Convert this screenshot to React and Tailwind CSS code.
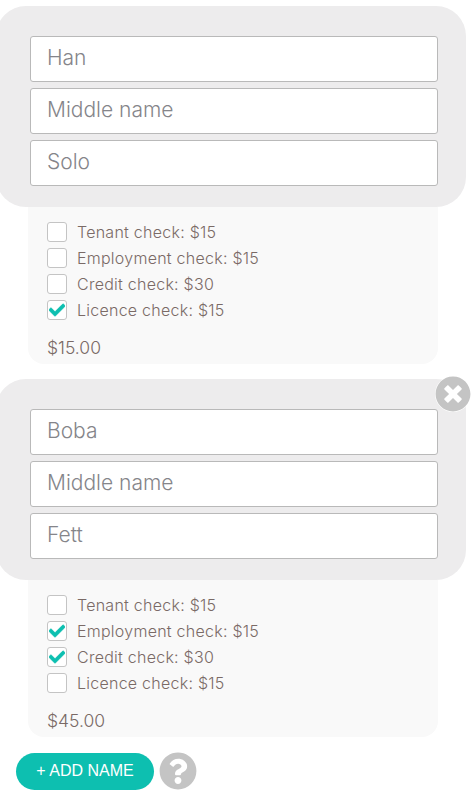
import React from 'react';
import { FaCheck, FaQuestionCircle, FaTimesCircle } from 'react-icons/fa';

const people = [
    {
        first: 'Han',
        last: 'Solo',
        total: '$15.00',
        checks: [false, false, false, true],
    },
    {
        first: 'Boba',
        last: 'Fett',
        total: '$45.00',
        checks: [false, true, true, false],
        removable: true,
    },
];

const checkNames = ['Tenant check: $15', 'Employment check: $15', 'Credit check: $30', 'Licence check: $15'];

const NameInput = ({ value, placeholder }) => (
    <input
        type="text"
        readOnly
        defaultValue={value}
        placeholder={placeholder}
        className="h-[46px] w-full rounded-[3px] border border-[#b9b9b9] bg-white pb-[3px] pl-4 pr-4 text-[21px] font-light text-[#85858a] placeholder:text-[#85858a] outline-none"
    />
);

const CheckRow = ({ label, checked }) => (
    <div className="flex h-[26px] items-center gap-[10px]">
        <span className="flex h-5 w-5 items-center justify-center rounded-[3px] border-[1.5px] border-[#c4c4c4] bg-white">
            {checked && <FaCheck className="text-[16px] text-[#0dbfb0] [stroke-width:30]" />}
        </span>
        <span className="text-[16px] font-light tracking-[0.25px] text-[#7a6a66]">{label}</span>
    </div>
);

const PersonCard = ({ person }) => (
    <div className="relative">
        <div className="-ml-1 flex w-[470px] flex-col gap-[6px] rounded-[30px] bg-[#edeced] pb-[21px] pl-[34px] pr-7 pt-[30px]">
            <NameInput value={person.first} />
            <NameInput placeholder="Middle name" />
            <NameInput value={person.last} />
        </div>
        {person.removable && (
            <button className="absolute -top-[3px] left-[435px] rounded-full bg-white text-[36px] text-[#c4c4c4]">
                <FaTimesCircle />
            </button>
        )}
        <div className="ml-7 w-[410px] rounded-b-2xl bg-[#f9f9f9] pb-[3px] pl-[19px] pt-[12px]">
            {person.checks.map((checked, i) => (
                <CheckRow key={checkNames[i]} label={checkNames[i]} checked={checked} />
            ))}
            <div className="mt-[12px] text-[17.5px] font-light leading-[26px] text-[#7a6a66]">{person.total}</div>
        </div>
    </div>
);

export default function App() {
    return (
        <div className="h-[798px] w-[474px] overflow-hidden bg-white pt-[6px] font-['Inter',sans-serif]">
            <div className="flex flex-col gap-[15px]">
                {people.map((person) => (
                    <PersonCard key={person.first} person={person} />
                ))}
            </div>
            <div className="mt-[15px] flex items-center gap-[5px] pl-4">
                <button className="h-[37px] w-[138px] rounded-full bg-[#0dbfb0] font-['Liberation_Sans',sans-serif] text-[16px] text-white">
                    + ADD NAME
                </button>
                <FaQuestionCircle className="text-[38px] text-[#c4c4c4]" />
            </div>
        </div>
    );
}
